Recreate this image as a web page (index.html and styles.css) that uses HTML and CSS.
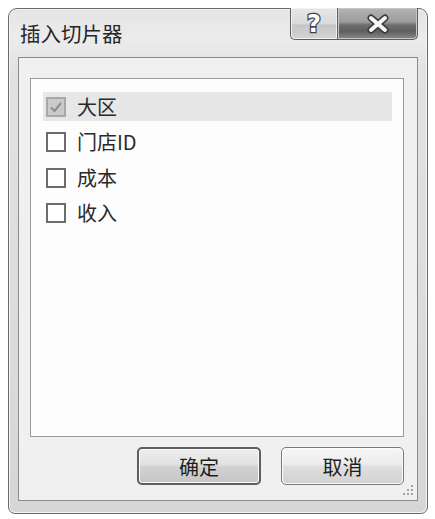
FILE: index.html
```html
<!DOCTYPE html>
<html lang="zh-CN">
<head>
<meta charset="utf-8">
<title>插入切片器</title>
<link rel="stylesheet" href="styles.css">
</head>
<body>
<div class="window">
  <div class="titlebar">
    <div class="title">插入切片器</div>
    <div class="caption">
      <div class="cap-btn help">
        <svg width="20" height="26" viewBox="0 0 20 26"><text x="10" y="21" text-anchor="middle" class="q">?</text></svg>
      </div>
      <div class="cap-btn close">
        <svg width="26" height="20" viewBox="0 0 26 20"><path d="M6 4 L20 16 M20 4 L6 16" class="x-out"/><path d="M6 4 L20 16 M20 4 L6 16" class="x-in"/></svg>
      </div>
    </div>
  </div>
  <div class="client">
    <div class="listbox">
      <div class="row selected">
        <span class="check checked">
          <svg width="16" height="16" viewBox="0 0 16 16"><path d="M3 8.5 L6.5 12 L13 4" class="tick"/></svg>
        </span>
        <span class="label">大区</span>
      </div>
      <div class="row"><span class="check"></span><span class="label">门店ID</span></div>
      <div class="row"><span class="check"></span><span class="label">成本</span></div>
      <div class="row"><span class="check"></span><span class="label">收入</span></div>
    </div>
    <div class="actions">
      <button class="btn default">确定</button>
      <button class="btn">取消</button>
    </div>
    <svg class="grip" width="14" height="14" viewBox="0 0 14 14">
      <rect x="11" y="1" width="2" height="2"/>
      <rect x="7" y="5" width="2" height="2"/><rect x="11" y="5" width="2" height="2"/>
      <rect x="3" y="9" width="2" height="2"/><rect x="7" y="9" width="2" height="2"/><rect x="11" y="9" width="2" height="2"/>
    </svg>
  </div>
</div>
</body>
</html>
```

FILE: styles.css
```css
html, body {
  margin: 0;
  padding: 0;
  background: #ffffff;
}
body {
  padding: 8px 0 0 8px;
  font-family: "Noto Sans CJK SC", "Noto Sans", sans-serif;
}
.window {
  box-sizing: border-box;
  width: 420px;
  height: 506px;
  border: 1px solid #6a6a6a;
  border-radius: 9px 9px 7px 7px;
  background: linear-gradient(180deg, #e4e4e4 0px, #ececec 30px, #e2e2e2 60px, #dcdcdc 300px, #d6d6d6 100%);
  display: flex;
  flex-direction: column;
  box-shadow: inset 0 0 0 1px #f4f4f4;
}
.titlebar {
  height: 48px;
  display: flex;
  justify-content: space-between;
  align-items: flex-start;
  padding: 0 9px 0 11px;
}
.title {
  padding-top: 12px;
  font-size: 20.5px;
  line-height: 24px;
  color: #262626;
}
.caption {
  display: flex;
  margin-top: -1px;
}
.cap-btn {
  box-sizing: border-box;
  height: 32px;
  border: 1px solid #5e5e5e;
  border-top: none;
  display: flex;
  align-items: center;
  justify-content: center;
}
.help {
  width: 47px;
  border-radius: 0 0 0 5px;
  border-right: none;
  background: linear-gradient(180deg, #e6e6e6 0%, #dadada 50%, #c6c6c6 55%, #d4d4d4 100%);
  box-shadow: inset 0 0 0 1px #f2f2f2;
}
.close {
  width: 81px;
  border-radius: 0 0 5px 0;
  background: linear-gradient(180deg, #b4b4b4 0%, #9c9c9c 45%, #6e6e6e 55%, #5e5e5e 75%, #8a8a8a 100%);
  box-shadow: inset 0 0 0 1px #c8c8c8;
}
.help svg, .close svg { display: block; }
.q {
  font-family: "DejaVu Sans", sans-serif;
  font-weight: bold;
  font-size: 24px;
  fill: #ffffff;
  stroke: #3e3e3e;
  stroke-width: 2.4px;
  paint-order: stroke;
}
.x-out {
  stroke: #3a3a3a;
  stroke-width: 7px;
  stroke-linecap: round;
  fill: none;
}
.x-in {
  stroke: #f6f6f6;
  stroke-width: 4px;
  stroke-linecap: round;
  fill: none;
}
.client {
  position: relative;
  box-sizing: border-box;
  margin: 0 9px;
  height: 444px;
  border: 1px solid #8c8c8c;
  background: #f0f0f0;
  padding: 20px 13px 0 11px;
  display: flex;
  flex-direction: column;
}
.listbox {
  box-sizing: border-box;
  height: 359px;
  border: 1px solid #9a9a9a;
  background: #fdfdfd;
  padding: 13px 11px 0 12px;
  display: flex;
  flex-direction: column;
  gap: 6.5px;
}
.row {
  height: 29px;
  display: flex;
  align-items: center;
  padding-left: 3px;
}
.row.selected {
  background: #e7e7e7;
}
.check {
  box-sizing: border-box;
  width: 20px;
  height: 20px;
  border: 2px solid #6c6c6c;
  background: #ffffff;
  margin-right: 11px;
  display: flex;
  align-items: center;
  justify-content: center;
}
.check.checked {
  border-color: #a8a8a8;
  background: #cacaca;
}
.tick {
  fill: none;
  stroke: #8c8c8c;
  stroke-width: 2px;
}
.label {
  font-size: 20px;
  line-height: 24px;
  color: #2a2a2a;
}
.actions {
  margin-top: 10px;
  display: flex;
  justify-content: flex-end;
  gap: 20px;
}
.btn {
  box-sizing: border-box;
  width: 123px;
  height: 38px;
  border: 1px solid #7a7a7a;
  border-radius: 5px;
  background: linear-gradient(180deg, #f6f6f6 0%, #ececec 45%, #dedede 52%, #d2d2d2 100%);
  box-shadow: inset 0 0 0 1px #fbfbfb;
  font-family: "Noto Sans CJK SC", "Noto Sans", sans-serif;
  font-size: 20px;
  color: #1e1e1e;
  padding: 0;
  margin: 0;
}
.btn.default {
  width: 124px;
  border: 2px solid #5e5e5e;
  background: linear-gradient(180deg, #eeeeee 0%, #e2e2e2 45%, #d2d2d2 52%, #c6c6c6 100%);
}
.grip {
  position: absolute;
  right: 3px;
  bottom: 2px;
  fill: #a4a4a4;
}
```
